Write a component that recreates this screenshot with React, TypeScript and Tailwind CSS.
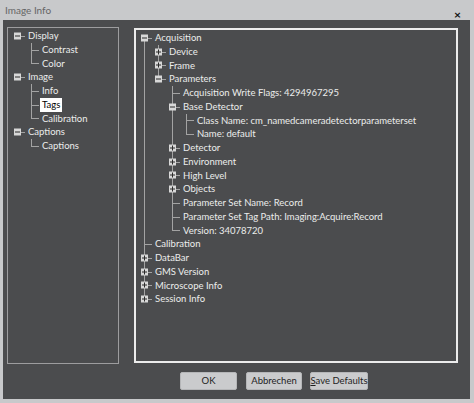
import React from "react";

type Node = {
  label: string;
  children?: Node[];
  expanded?: boolean;
  selected?: boolean;
};

type Row = {
  node: Node;
  depth: number;
  lastFlags: boolean[]; // isLast for each ancestor level + self
  firstRoot: boolean;
};

const leftTree: Node[] = [
  {
    label: "Display",
    expanded: true,
    children: [{ label: "Contrast" }, { label: "Color" }],
  },
  {
    label: "Image",
    expanded: true,
    children: [
      { label: "Info" },
      { label: "Tags", selected: true },
      { label: "Calibration" },
    ],
  },
  { label: "Captions", expanded: true, children: [{ label: "Captions" }] },
];

const collapsed = (label: string): Node => ({ label, children: [{ label: "" }] });

const rightTree: Node[] = [
  {
    label: "Acquisition",
    expanded: true,
    children: [
      collapsed("Device"),
      collapsed("Frame"),
      {
        label: "Parameters",
        expanded: true,
        children: [
          { label: "Acquisition Write Flags: 4294967295" },
          {
            label: "Base Detector",
            expanded: true,
            children: [
              { label: "Class Name: cm_namedcameradetectorparameterset" },
              { label: "Name: default" },
            ],
          },
          collapsed("Detector"),
          collapsed("Environment"),
          collapsed("High Level"),
          collapsed("Objects"),
          { label: "Parameter Set Name: Record" },
          { label: "Parameter Set Tag Path: Imaging:Acquire:Record" },
          { label: "Version: 34078720" },
        ],
      },
    ],
  },
  { label: "Calibration" },
  collapsed("DataBar"),
  collapsed("GMS Version"),
  collapsed("Microscope Info"),
  collapsed("Session Info"),
];

function flatten(nodes: Node[], depth = 0, parentFlags: boolean[] = []): Row[] {
  const rows: Row[] = [];
  nodes.forEach((node, i) => {
    const isLast = i === nodes.length - 1;
    const flags = [...parentFlags, isLast];
    rows.push({ node, depth, lastFlags: flags, firstRoot: depth === 0 && i === 0 });
    if (node.expanded && node.children) {
      rows.push(...flatten(node.children, depth + 1, flags));
    }
  });
  return rows;
}

const LINE = "bg-[#a3a3a3]";

const ExpandBox = ({ open }: { open: boolean }) => (
  <span className="absolute left-[3px] top-1/2 -translate-y-1/2 w-[7px] h-[7px] bg-[#d8d8d8] flex items-center justify-center">
    <span className="absolute w-[5px] h-[1px] bg-[#2a2a2a]" />
    {!open && <span className="absolute w-[1px] h-[5px] bg-[#2a2a2a]" />}
  </span>
);

const TreeRow = ({ row, rootLines }: { row: Row; rootLines: boolean }) => {
  const { node, depth, lastFlags } = row;
  const hasKids = !!node.children;
  const isLast = lastFlags[depth];
  const showVert = rootLines || depth > 0;
  return (
    <div className="flex h-[13.75px] items-stretch">
      {lastFlags.slice(0, depth).map((last, lvl) => (
        <span key={lvl} className="relative w-[14px] shrink-0">
          {!last && (rootLines || lvl > 0) && (
            <span className={`absolute left-[6px] top-0 bottom-0 w-[1px] ${LINE}`} />
          )}
        </span>
      ))}
      <span className="relative w-[14px] shrink-0">
        {showVert && !row.firstRoot && (
          <span className={`absolute left-[6px] top-0 h-1/2 w-[1px] ${LINE}`} />
        )}
        {showVert && !isLast && (
          <span className={`absolute left-[6px] top-1/2 bottom-0 w-[1px] ${LINE}`} />
        )}
        <span className={`absolute left-[6px] right-0 top-1/2 h-[1px] ${LINE}`} />
        {hasKids && <ExpandBox open={!!node.expanded} />}
      </span>
      <span
        className={`flex items-center whitespace-nowrap leading-none ${
          node.selected
            ? "bg-white text-black px-[2px] ml-[1px]"
            : "text-[#ececec] ml-[3px]"
        }`}
      >
        {node.label}
      </span>
    </div>
  );
};

const Tree = ({ nodes, rootLines }: { nodes: Node[]; rootLines: boolean }) => (
  <div className="flex flex-col">
    {flatten(nodes).map((row, i) => (
      <TreeRow key={i} row={row} rootLines={rootLines} />
    ))}
  </div>
);

const DialogButton = ({ width, children }: { width: string; children: React.ReactNode }) => (
  <button
    className={`${width} shrink-0 h-[18px] rounded-[2px] bg-[#cacbcd] text-[9.5px] whitespace-nowrap text-[#1e1e1e] border border-[#b5b6b8] flex items-center justify-center`}
  >
    {children}
  </button>
);

export default function App() {
  return (
    <div
      className="w-[474px] h-[403px] bg-[#c8c9cb] flex flex-col overflow-hidden"
      style={{ fontFamily: 'Lato, "Noto Sans", sans-serif' }}
    >
      <div className="h-[20px] shrink-0 flex items-start justify-between pl-[5px] pr-[13px]">
        <span className="text-[10px] text-[#666] mt-[3px]">Image Info</span>
        <span className="text-[12px] font-bold text-[#111] mt-[9px] leading-none">×</span>
      </div>
      <div className="flex-1 ml-[3px] mr-[4px] mb-[4px] bg-[#4b4c4e] flex flex-col pt-[7px] pl-[4px] pr-[12px]">
        <div className="flex gap-[15px] h-[337px] text-[9.5px]">
          <div className="w-[112px] shrink-0 h-[337px] border border-[#9d9d9f] pl-[3px] pt-[1px]">
            <Tree nodes={leftTree} rootLines={false} />
          </div>
          <div className="flex-1 h-[335px] mt-[1px] border-2 border-[#ececec] pl-[2px] pt-[1px]">
            <Tree nodes={rightTree} rootLines={true} />
          </div>
        </div>
        <div className="flex pl-[173px] mt-[8px]">
          <DialogButton width="w-[57px]">OK</DialogButton>
          <span className="w-[9px] shrink-0" />
          <DialogButton width="w-[56px]">Abbrechen</DialogButton>
          <span className="w-[8px] shrink-0" />
          <DialogButton width="w-[58px]">
            <span className="underline">S</span>ave Defaults
          </DialogButton>
        </div>
      </div>
    </div>
  );
}
